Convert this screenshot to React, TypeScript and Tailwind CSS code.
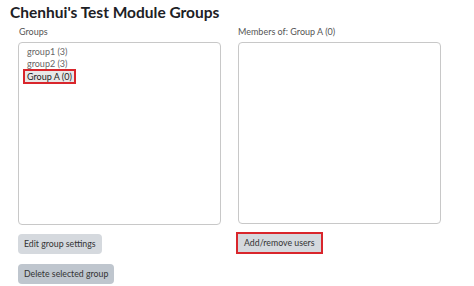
export default function App() {
  const groups = [
    { name: 'group1 (3)', selected: false },
    { name: 'group2 (3)', selected: false },
    { name: 'Group A (0)', selected: true },
  ];

  return (
    <div className="w-[474px] h-[286px] bg-white overflow-hidden font-['Lato',sans-serif] text-[#333]">
      <h1 className="pl-[10px] pt-[1px] text-[15.5px] leading-[22px] font-bold text-[#1d2125]">
        Chenhui's Test Module Groups
      </h1>

      <div className="flex gap-[17px] pl-[18px] mt-[3px]">
        <div className="w-[203px] flex flex-col">
          <label className="text-[9px] leading-[12px] text-[#555] pl-[1px]">Groups</label>
          <div className="mt-[4px] h-[183px] border border-[#c8c8c8] rounded-[4px] px-[4px] pt-[3px]">
            {groups.map((g) =>
              g.selected ? (
                <div
                  key={g.name}
                  className="w-fit border-2 border-[#d9262c] bg-[#e8e8e8] px-[2px] text-[9px] leading-[9px] py-[1px] text-[#222]"
                >
                  {g.name}
                </div>
              ) : (
                <div key={g.name} className="pl-[4px] text-[9px] leading-[11.5px] text-[#666]">
                  {g.name}
                </div>
              )
            )}
          </div>
          <button className="mt-[9px] self-start h-[20px] px-[6px] rounded-[4px] bg-[#d5d9de] text-[8.75px] text-[#333]">
            Edit group settings
          </button>
          <button className="mt-[10px] self-start h-[20px] px-[6px] rounded-[4px] bg-[#bfc6ce] text-[8.75px] text-[#333]">
            Delete selected group
          </button>
        </div>

        <div className="w-[203px] flex flex-col">
          <label className="text-[9px] leading-[12px] text-[#555]">Members of: Group A (0)</label>
          <div className="mt-[4px] h-[182px] border border-[#c8c8c8] rounded-[4px]" />
          <button className="mt-[8px] -ml-[2px] self-start h-[22px] px-[6px] border-2 border-[#d9262c] bg-[#d5d9de] text-[8.75px] text-[#333]">
            Add/remove users
          </button>
        </div>
      </div>
    </div>
  );
}
